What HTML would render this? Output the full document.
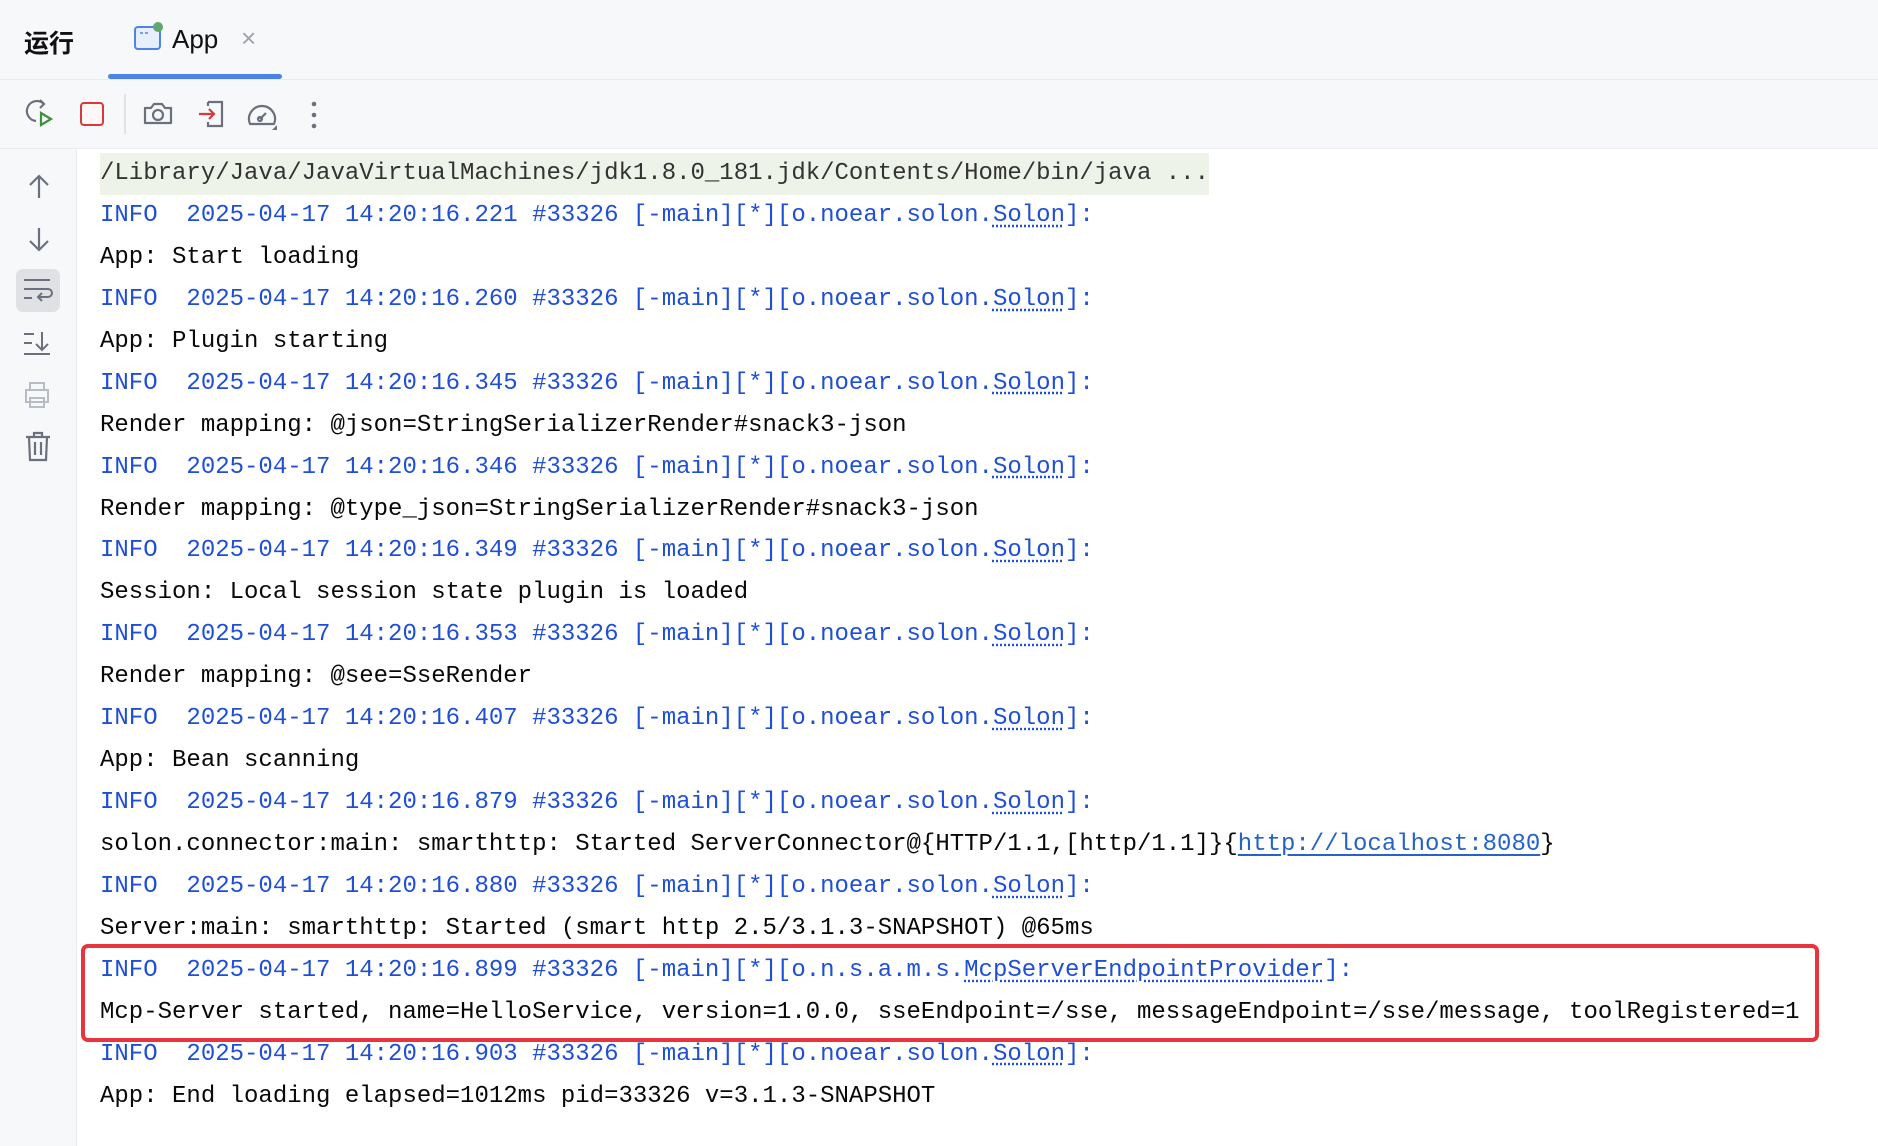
<!DOCTYPE html>
<html><head><meta charset="utf-8"><style>
*{margin:0;padding:0;box-sizing:border-box}
body{width:1878px;height:1146px;overflow:hidden;background:#fff;font-family:"Liberation Sans","Noto Sans CJK SC",sans-serif;position:relative}
.top{position:absolute;left:0;top:0;width:1878px;height:149px;background:#f7f8fa;border-bottom:1px solid #ebecf0}
.tabsep{position:absolute;left:0;top:79px;width:1878px;height:1px;background:#ebecf0}
.gut{position:absolute;left:0;top:149px;width:77px;height:997px;background:#f7f8fa;border-right:1px solid #ebecf0}
.abs{position:absolute}
.log{position:absolute;left:100px;top:153px;font-family:"Liberation Mono",monospace;font-size:24px;line-height:41.93px;white-space:pre;color:#080808}
.b{color:#1f4fd5}
.u{text-decoration:underline dotted;text-underline-offset:4px}
.lnk{color:#2563c9;text-decoration:underline;text-underline-offset:4px}
.path{background:#edf3e9;display:inline-block;color:#333}
</style></head><body>
<div class="top"></div><div class="tabsep"></div>
<div class="abs" style="left:24px;top:24px;font-size:25px;font-weight:bold;color:#111">运行</div>
<svg class="abs" style="left:133px;top:22px" width="32" height="30" viewBox="0 0 32 30"><rect x="2" y="5" width="25" height="22" rx="3" fill="#e8effc" stroke="#4f83e8" stroke-width="2"/><path d="M7 11h3M12 11h3" stroke="#4f83e8" stroke-width="1.5"/><circle cx="25" cy="5" r="5" fill="#5fa869"/></svg>
<div class="abs" style="left:172px;top:24px;font-size:26px;color:#111">App</div>
<div class="abs" style="left:241px;top:23px;font-size:26px;color:#a0a4ad">×</div>
<div class="abs" style="left:108px;top:74px;width:174px;height:5px;border-radius:3px;background:#4c83e8"></div>
<svg class="abs" style="left:22px;top:96px" width="36" height="36" viewBox="0 0 36 36" fill="none" stroke-width="2.2"><path d="M22 8A10 10 0 1 0 14 25" stroke="#6c707e"/><path d="M18 4l4 4-4 4" stroke="#6c707e"/><path d="M19 17l10 6-10 6z" stroke="#3e8f3e"/></svg>
<div class="abs" style="left:80px;top:102px;width:24px;height:24px;border:2.5px solid #d63b3b;border-radius:4px;background:#fff6f6"></div>
<div class="abs" style="left:124px;top:94px;width:2px;height:40px;background:#dfe1e5"></div>
<svg class="abs" style="left:142px;top:98px" width="32" height="32" viewBox="0 0 32 32" fill="none" stroke="#6c707e" stroke-width="2.2"><path d="M3 10h6l3-4h8l3 4h6v15H3z" stroke-linejoin="round"/><circle cx="16" cy="17" r="5"/></svg>
<svg class="abs" style="left:196px;top:98px" width="32" height="32" viewBox="0 0 32 32" fill="none" stroke-width="2.2"><path d="M12 4h14v24H12v-4M12 8V4" stroke="#6c707e"/><path d="M3 16h15M13 11l5 5-5 5" stroke="#d63b3b"/></svg>
<svg class="abs" style="left:246px;top:98px" width="34" height="34" viewBox="0 0 34 34" fill="none" stroke="#6c707e" stroke-width="2.2"><path d="M4 26A13 13 0 1 1 28 26z" stroke-linejoin="round"/><path d="M14 21l6-6"/><circle cx="14" cy="21" r="2"/><path d="M26 32l5-5v5z" fill="#6c707e" stroke="none"/></svg>
<svg class="abs" style="left:306px;top:100px" width="16" height="30"><circle cx="8" cy="4" r="2.3" fill="#6c707e"/><circle cx="8" cy="15" r="2.3" fill="#6c707e"/><circle cx="8" cy="26" r="2.3" fill="#6c707e"/></svg>
<div class="gut"></div>
<svg class="abs" style="left:24px;top:172px" width="30" height="30" fill="none" stroke="#6c707e" stroke-width="2.2"><path d="M15 4v22M6 13l9-9 9 9"/></svg>
<svg class="abs" style="left:24px;top:224px" width="30" height="30" fill="none" stroke="#6c707e" stroke-width="2.2"><path d="M15 4v22M6 17l9 9 9-9"/></svg>
<div class="abs" style="left:16px;top:269px;width:44px;height:43px;border-radius:7px;background:#dfe1e5"></div>
<svg class="abs" style="left:22px;top:276px" width="32" height="30" fill="none" stroke="#6c707e" stroke-width="2"><path d="M2 4h26M2 13h24a4 4 0 0 1 0 8h-9M20 17l-4 4 4 4M2 22h8"/></svg>
<svg class="abs" style="left:22px;top:328px" width="32" height="30" fill="none" stroke="#6c707e" stroke-width="2"><path d="M2 6h10M2 15h8M2 26h26M20 4v18M14 16l6 6 6-6"/></svg>
<svg class="abs" style="left:22px;top:380px" width="32" height="30" fill="none" stroke="#b8bcc4" stroke-width="2"><path d="M8 10V3h14v7M4 10h22v12H4zM8 18h14v9H8z"/></svg>
<svg class="abs" style="left:23px;top:430px" width="30" height="34" fill="none" stroke="#6c707e" stroke-width="2.2"><path d="M3 7h24M11 7V3h8v4M6 7l1 23h16l1-23M12 12v13M18 12v13"/></svg>
<div class="log"><span class="path">/Library/Java/JavaVirtualMachines/jdk1.8.0_181.jdk/Contents/Home/bin/java ...</span>
<span class="b">INFO  2025-04-17 14:20:16.221 #33326 [-main][*][o.noear.solon.<span class="u">Solon</span>]:</span>
App: Start loading
<span class="b">INFO  2025-04-17 14:20:16.260 #33326 [-main][*][o.noear.solon.<span class="u">Solon</span>]:</span>
App: Plugin starting
<span class="b">INFO  2025-04-17 14:20:16.345 #33326 [-main][*][o.noear.solon.<span class="u">Solon</span>]:</span>
Render mapping: @json=StringSerializerRender#snack3-json
<span class="b">INFO  2025-04-17 14:20:16.346 #33326 [-main][*][o.noear.solon.<span class="u">Solon</span>]:</span>
Render mapping: @type_json=StringSerializerRender#snack3-json
<span class="b">INFO  2025-04-17 14:20:16.349 #33326 [-main][*][o.noear.solon.<span class="u">Solon</span>]:</span>
Session: Local session state plugin is loaded
<span class="b">INFO  2025-04-17 14:20:16.353 #33326 [-main][*][o.noear.solon.<span class="u">Solon</span>]:</span>
Render mapping: @see=SseRender
<span class="b">INFO  2025-04-17 14:20:16.407 #33326 [-main][*][o.noear.solon.<span class="u">Solon</span>]:</span>
App: Bean scanning
<span class="b">INFO  2025-04-17 14:20:16.879 #33326 [-main][*][o.noear.solon.<span class="u">Solon</span>]:</span>
solon.connector:main: smarthttp: Started ServerConnector@{HTTP/1.1,[http/1.1]}{<span class="lnk">http://localhost:8080</span>}
<span class="b">INFO  2025-04-17 14:20:16.880 #33326 [-main][*][o.noear.solon.<span class="u">Solon</span>]:</span>
Server:main: smarthttp: Started (smart http 2.5/3.1.3-SNAPSHOT) @65ms
<span class="b">INFO  2025-04-17 14:20:16.899 #33326 [-main][*][o.n.s.a.m.s.<span class="u">McpServerEndpointProvider</span>]:</span>
Mcp-Server started, name=HelloService, version=1.0.0, sseEndpoint=/sse, messageEndpoint=/sse/message, toolRegistered=1
<span class="b">INFO  2025-04-17 14:20:16.903 #33326 [-main][*][o.noear.solon.<span class="u">Solon</span>]:</span>
App: End loading elapsed=1012ms pid=33326 v=3.1.3-SNAPSHOT</div>
<div class="abs" style="left:81px;top:944px;width:1738px;height:98px;border:4px solid #e8343c;border-radius:7px"></div>
</body></html>
